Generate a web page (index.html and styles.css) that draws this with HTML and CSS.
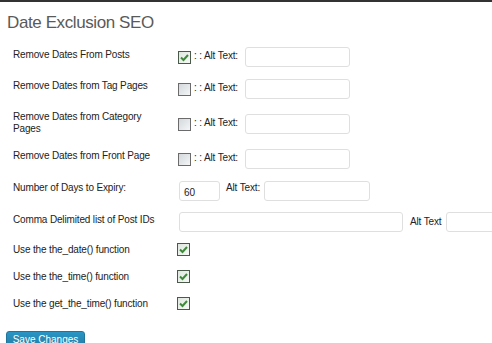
FILE: index.html
```html
<!DOCTYPE html>
<html>
<head>
<meta charset="utf-8">
<link rel="stylesheet" href="styles.css">
</head>
<body>
<div class="topbar"></div>
<div class="wrap">
  <h2 class="title">Date Exclusion SEO</h2>
  <div class="form">
    <div class="row r1">
      <div class="label">Remove Dates From Posts</div>
      <div class="field"><span class="cb checked"><svg viewBox="0 0 13 13" width="13" height="13"><path d="M3 6.5 L5.5 9 L10 4" fill="none" stroke="#3f8a3a" stroke-width="2"/></svg></span><span class="alt">: : Alt Text:</span><span class="input w105"></span></div>
    </div>
    <div class="row r2">
      <div class="label">Remove Dates from Tag Pages</div>
      <div class="field"><span class="cb"></span><span class="alt">: : Alt Text:</span><span class="input w105"></span></div>
    </div>
    <div class="row r3">
      <div class="label">Remove Dates from Category<br>Pages</div>
      <div class="field"><span class="cb"></span><span class="alt">: : Alt Text:</span><span class="input w105"></span></div>
    </div>
    <div class="row r4">
      <div class="label">Remove Dates from Front Page</div>
      <div class="field"><span class="cb"></span><span class="alt">: : Alt Text:</span><span class="input w105"></span></div>
    </div>
    <div class="row r5">
      <div class="label">Number of Days to Expiry:</div>
      <div class="field"><span class="input w41 val">60</span><span class="alt2">Alt Text:</span><span class="input w106"></span></div>
    </div>
    <div class="row r6">
      <div class="label">Comma Delimited list of Post IDs</div>
      <div class="field"><span class="input w224"></span><span class="alt3">Alt Text</span><span class="input w60"></span></div>
    </div>
    <div class="row r7">
      <div class="label">Use the the_date() function</div>
      <div class="field"><span class="cb checked cb2"><svg viewBox="0 0 13 13" width="13" height="13"><path d="M3 6.5 L5.5 9 L10 4" fill="none" stroke="#3f8a3a" stroke-width="2"/></svg></span></div>
    </div>
    <div class="row r7">
      <div class="label">Use the the_time() function</div>
      <div class="field"><span class="cb checked cb2"><svg viewBox="0 0 13 13" width="13" height="13"><path d="M3 6.5 L5.5 9 L10 4" fill="none" stroke="#3f8a3a" stroke-width="2"/></svg></span></div>
    </div>
    <div class="row r7">
      <div class="label">Use the get_the_time() function</div>
      <div class="field"><span class="cb checked cb2"><svg viewBox="0 0 13 13" width="13" height="13"><path d="M3 6.5 L5.5 9 L10 4" fill="none" stroke="#3f8a3a" stroke-width="2"/></svg></span></div>
    </div>
  </div>
  <div class="actions"><span class="button">Save Changes</span></div>
</div>
</body>
</html>
```
FILE: styles.css
```css
html, body { margin: 0; padding: 0; background: #fff; }
body { font-family: "Liberation Sans", Arial, sans-serif; color: #222; overflow: hidden; width: 492px; height: 343px; }
.topbar { height: 2px; background: #333; }
.wrap { padding: 0 0 0 7px; }
.title { margin: 0; height: 39px; padding-top: 9px; box-sizing: border-box; font-weight: normal; font-size: 17px; letter-spacing: -0.4px; line-height: 24px; color: #5a5a5a; }
.form { display: flex; flex-direction: column; }
.row { display: flex; align-items: center; font-size: 10px; letter-spacing: -0.15px; white-space: nowrap; }
.r1 { height: 32px; }
.r2 { height: 31px; }
.r3 { height: 39px; }
.r4 { height: 31px; }
.r5 { height: 33px; }
.r6 { height: 30px; }
.r7 { height: 27px; }
.label { flex: 0 0 165px; width: 165px; padding-left: 6px; box-sizing: border-box; line-height: 12px; color: #222; margin-top: -5px; }
.r3 .label { margin-top: -1px; }
.r7 .label { margin-top: -1px; }
.field { display: flex; align-items: center; flex-shrink: 0; }
.cb { width: 13px; height: 13px; box-sizing: border-box; border: 1px solid #6b6b6b; background: linear-gradient(135deg, #d4d8dc, #f4f6f7); margin-left: 6px; margin-top: 1px; display: inline-block; flex-shrink: 0; }
.cb svg { display: block; margin: -1px; }
.cb.checked { background: linear-gradient(135deg, #dfe6df, #f6f9f6); border-color: #4a5a4a; }
.cb2 { margin-left: 5px; margin-top: -3px; }
.alt { margin-left: 3px; margin-right: 4px; color: #222; margin-top: -3px; width: 47px; }
.alt2 { margin-left: 6px; margin-right: 5px; margin-top: -6px; width: 33px; }
.alt3 { margin-left: 7px; margin-right: 4px; margin-top: -2px; width: 32px; }
.input { display: inline-block; height: 20px; box-sizing: border-box; border: 1px solid #dfdfdf; border-radius: 3px; background: #fff; flex-shrink: 0; }
.w105 { width: 105px; }
.w41 { width: 41px; margin-left: 7px; }
.w106 { width: 106px; }
.w224 { width: 224px; margin-left: 7px; }
.w60 { width: 60px; }
.val { font-size: 10px; line-height: 20px; padding-left: 4px; padding-top: 1px; color: #222; }
.actions { margin-top: 11px; }
.button { display: inline-block; margin-left: -1px; width: 79px; height: 22px; box-sizing: border-box; border: 1px solid #21759b; border-radius: 3px; background: linear-gradient(#2a95c5, #21759b); color: #fff; font-size: 10px; line-height: 15px; text-align: center; }
```
